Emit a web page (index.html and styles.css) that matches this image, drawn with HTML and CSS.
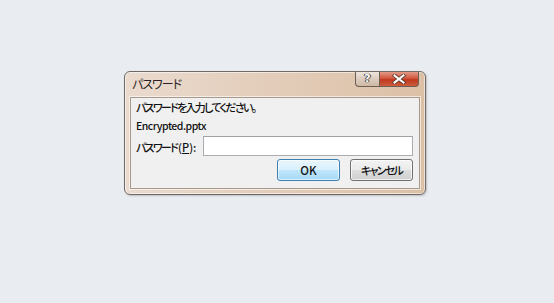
FILE: index.html
```html
<!DOCTYPE html>
<html lang="ja">
<head>
<meta charset="utf-8">
<title>パスワード</title>
<link rel="stylesheet" href="styles.css">
</head>
<body>
<div class="dialog">
  <div class="titlebar">
    <span class="title">パスワード</span>
    <div class="caption-buttons">
      <div class="cap-btn help"><span>?</span></div>
      <div class="cap-btn close">
        <svg width="14" height="10" viewBox="0 0 14 10"><path d="M2.5 1.5 L11.5 8.5 M11.5 1.5 L2.5 8.5" stroke="#5a3a30" stroke-width="3.6" stroke-linecap="square"/><path d="M2.5 1.5 L11.5 8.5 M11.5 1.5 L2.5 8.5" stroke="#ffffff" stroke-width="2" stroke-linecap="square"/></svg>
      </div>
    </div>
  </div>
  <div class="panel">
    <div class="line jp">パスワードを入力してください。</div>
    <div class="line latin">Encrypted.pptx</div>
    <div class="field-row">
      <label class="label"><span class="jp">パスワード</span><span class="ascii">(<u>P</u>):</span></label>
      <div class="input"></div>
    </div>
    <div class="button-row">
      <div class="btn default"><span class="latin-btn">OK</span></div>
      <div class="btn"><span class="jp">キャンセル</span></div>
    </div>
  </div>
</div>
</body>
</html>
```

FILE: styles.css
```css
html, body {
  margin: 0;
  padding: 0;
}
body {
  background: #e9ecf1;
  width: 554px;
  height: 303px;
  overflow: hidden;
  font-family: "Noto Sans CJK JP", "Noto Sans", sans-serif;
  font-size: 12px;
  font-weight: 500;
  color: #111111;
  font-feature-settings: "palt";
}
.jp {
  font-size: 11px;
  letter-spacing: -1.7px;
  white-space: nowrap;
}
.ascii {
  font-size: 11px;
  letter-spacing: 0;
  margin-left: 1px;
}
.dialog {
  margin: 71px 0 0 124px;
  width: 302px;
  height: 124px;
  box-sizing: border-box;
  border: 1px solid #6f6a66;
  border-radius: 6px;
  background: linear-gradient(90deg, #eadbcf 0%, #e4cfbd 40%, #dcc0a6 100%);
  box-shadow: inset 0 0 0 1px rgba(255,255,255,0.55), 1px 1px 2px rgba(0,0,0,0.2);
  padding: 0 5px 5px 5px;
  display: flex;
  flex-direction: column;
}
.titlebar {
  height: 25px;
  display: flex;
  justify-content: space-between;
  align-items: flex-start;
}
.title {
  margin-top: 3px;
  margin-left: 2px;
  line-height: 18px;
  font-size: 12px;
  font-weight: 400;
  color: #2a1f24;
  letter-spacing: -1px;
}
.caption-buttons {
  display: flex;
  margin-right: 1px;
}
.cap-btn {
  height: 15px;
  box-sizing: border-box;
  border: 1px solid #6d5e55;
  border-top: none;
  display: flex;
  align-items: center;
  justify-content: center;
}
.help {
  width: 24px;
  border-radius: 0 0 0 4px;
  border-right: none;
  background: linear-gradient(180deg, #eee5dd 0%, #dccbbd 50%, #cfb9a6 100%);
  color: #ffffff;
  font-family: "DejaVu Sans", sans-serif;
  font-weight: bold;
  font-size: 11px;
  line-height: 14px;
  text-shadow: 0 0 1px #333, 0 0 1px #333, 1px 0 0 #555, -1px 0 0 #555;
}
.close {
  width: 40px;
  border-radius: 0 0 4px 0;
  background: linear-gradient(180deg, #e39a85 0%, #d0583e 45%, #c0381e 55%, #cd5c3d 100%);
}
.panel {
  flex: 1;
  background: #f0f0f0;
  border: 1px solid #a8998b;
  box-shadow: 0 0 0 1px rgba(255,255,255,0.6);
  padding: 0 6px 0 5px;
  display: flex;
  flex-direction: column;
}
.line {
  line-height: 18px;
  height: 18px;
}
.latin {
  font-family: "Noto Sans CJK JP", "Open Sans", sans-serif;
  font-size: 10.5px;
  letter-spacing: -0.5px;
  line-height: 19px;
  height: 19px;
}
.field-row {
  display: flex;
  align-items: center;
  margin-top: 1px;
  height: 20px;
}
.label {
  width: 67px;
  white-space: nowrap;
}
.input {
  width: 210px;
  height: 20px;
  box-sizing: border-box;
  border: 1px solid #abadb3;
  border-top-color: #a0a2a8;
  background: #ffffff;
}
.button-row {
  display: flex;
  justify-content: flex-end;
  gap: 10px;
  margin-top: 3px;
}
.btn {
  width: 63px;
  height: 22px;
  box-sizing: border-box;
  border: 1px solid #707070;
  border-radius: 3px;
  background: linear-gradient(180deg, #f2f2f2 0%, #ebebeb 48%, #dddddd 52%, #cfcfcf 100%);
  box-shadow: inset 0 0 0 1px rgba(255,255,255,0.7);
  display: flex;
  align-items: center;
  justify-content: center;
  line-height: 16px;
}
.latin-btn {
  font-size: 11.5px;
}
.btn.default {
  border-color: #3c7fb1;
  background: linear-gradient(180deg, #eaf6fd 0%, #d9f0fc 48%, #bee6fd 52%, #a7d9f5 100%);
  box-shadow: inset 0 0 0 1px rgba(255,255,255,0.6);
}
```
